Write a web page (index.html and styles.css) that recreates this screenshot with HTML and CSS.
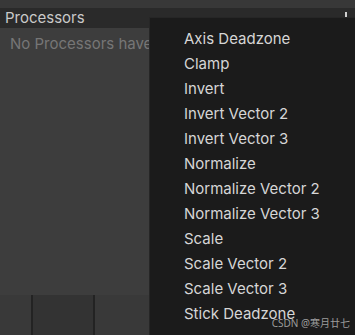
FILE: index.html
```html
<!DOCTYPE html>
<html>
<head>
<meta charset="utf-8">
<link rel="stylesheet" href="styles.css">
</head>
<body>
<div class="page">
  <div class="topband"></div>
  <div class="header"><span class="title">Processors</span><span class="scrollmark"></span></div>
  <div class="content">
    <div class="empty">No Processors have been added.</div>
  </div>
  <div class="footer">
    <div class="slot"></div>
  </div>
  <div class="menu">
    <div class="item">Axis Deadzone</div>
    <div class="item">Clamp</div>
    <div class="item">Invert</div>
    <div class="item">Invert Vector 2</div>
    <div class="item">Invert Vector 3</div>
    <div class="item">Normalize</div>
    <div class="item">Normalize Vector 2</div>
    <div class="item">Normalize Vector 3</div>
    <div class="item">Scale</div>
    <div class="item">Scale Vector 2</div>
    <div class="item">Scale Vector 3</div>
    <div class="item">Stick Deadzone</div>
  </div>
  <div class="watermark">CSDN @寒月廿七</div>
</div>
</body>
</html>
```
FILE: styles.css
```css
html, body {
  margin: 0;
  padding: 0;
  background: #3c3c3c;
}
.page {
  position: relative;
  width: 355px;
  height: 335px;
  overflow: hidden;
  display: flex;
  flex-direction: column;
  font-family: Inter, "Noto Sans", sans-serif;
}
.topband {
  height: 8px;
  background: #383838;
}
.header {
  height: 20px;
  background: #2a2a2a;
  display: flex;
  align-items: center;
  padding-left: 5px;
  position: relative;
}
.title {
  color: #c9c9c9;
  font-size: 15px;
  line-height: 20px;
}
.scrollmark {
  position: absolute;
  left: 345px;
  top: 4px;
  width: 2px;
  height: 5px;
  background: #d0d0d0;
}
.content {
  height: 267px;
  background: #3d3d3d;
  padding: 6px 0 0 10px;
  box-sizing: border-box;
}
.empty {
  color: #767676;
  font-size: 15px;
  line-height: 20px;
  white-space: nowrap;
  width: 139px;
  overflow: hidden;
}
.footer {
  flex: 1;
  background: #393939;
  padding-left: 31px;
}
.slot {
  width: 60px;
  height: 100%;
  background: #333333;
  border-left: 2px solid #232323;
  border-right: 2px solid #232323;
}
.menu {
  position: absolute;
  left: 149px;
  top: 17px;
  width: 210px;
  height: 330px;
  background: #1b1b1b;
  border-left: 1px solid #262626;
  border-top: 1px solid #262626;
  box-sizing: border-box;
  padding: 8px 0 0 34px;
}
.item {
  color: #d6d6d6;
  font-size: 15px;
  line-height: 25px;
  height: 25px;
  white-space: nowrap;
}
.watermark {
  position: absolute;
  right: 5px;
  bottom: 6px;
  font-family: "Noto Sans", "Noto Sans CJK SC", sans-serif;
  font-size: 10px;
  line-height: 12px;
  color: rgba(200, 200, 200, 0.75);
}
```
